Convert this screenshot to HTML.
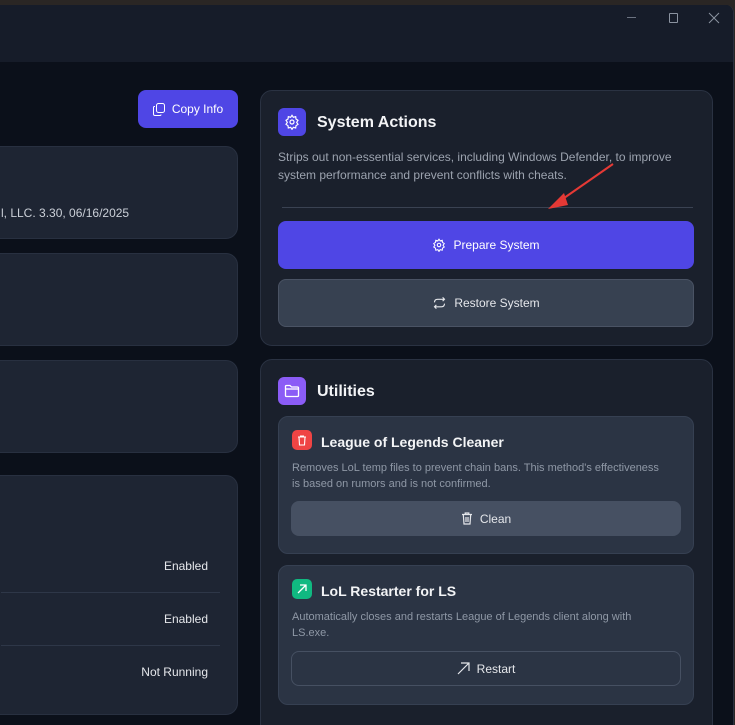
<!DOCTYPE html>
<html><head><style>
*{box-sizing:border-box;margin:0;padding:0}
body{width:735px;height:715px;overflow:hidden;background:#2a2624;font-family:"Liberation Sans",sans-serif;position:relative}
.win{position:absolute;left:0;top:5px;width:734px;height:720px;background:#0b101a;border-top-right-radius:8px;overflow:hidden;border-right:1px solid #2a3040}
.tb{position:absolute;left:0;top:0;width:100%;height:57px;background:#161c29}
.abs{position:absolute}
.card{position:absolute;left:-20px;width:258px;background:#1e2533;border:1px solid #283040;border-radius:12px}
.panel{position:absolute;left:260px;width:453px;background:#1a202c;border:1px solid #2a3242;border-radius:12px}
.btn{position:absolute;display:flex;align-items:center;justify-content:center;gap:7px;color:#e5e7eb;font-size:12px;border-radius:8px}
.sub{position:absolute;left:278px;width:416px;background:#2b3444;border:1px solid #364052;border-radius:10px}
.t{color:#f3f4f6;font-weight:bold}
.d{color:#9ca3af}
</style></head><body>
<div class="win">
<div class="tb">
 <div class="abs" style="left:627px;top:12px;width:9px;height:1px;background:#6b7280"></div>
 <div class="abs" style="left:669px;top:8px;width:9px;height:10px;border:1px solid #8b93a0;border-radius:1px"></div>
 <svg class="abs" style="left:708px;top:7px" width="12" height="12"><path d="M1 1L11 11M11 1L1 11" stroke="#8b93a0" stroke-width="1"/></svg>
</div>
<div class="btn" style="left:138px;top:85px;width:100px;height:38px;background:#4f46e5;font-size:12px;color:#fff"><svg width="12" height="13" viewBox="0 0 12 13"><rect x="3.5" y="0.5" width="8" height="9" rx="2" fill="none" stroke="#fff"/><path d="M2 3.5H1.5Q0.5 3.5 0.5 4.5V11Q0.5 12.5 2 12.5H7Q8 12.5 8 11.5" fill="none" stroke="#fff"/></svg>Copy Info</div>
<div class="card" style="top:141px;height:93px"><div class="abs d" style="left:20px;top:59px;font-size:12px;color:#cbd0d8">l, LLC. 3.30, 06/16/2025</div></div>
<div class="card" style="top:248px;height:93px"></div>
<div class="card" style="top:355px;height:93px"></div>
<div class="card" style="top:470px;height:240px">
 <div class="abs" style="right:29px;top:83px;font-size:12px;color:#e5e7eb">Enabled</div>
 <div class="abs" style="left:20px;right:17px;top:116px;height:1px;background:#2e3748"></div>
 <div class="abs" style="right:29px;top:136px;font-size:12px;color:#e5e7eb">Enabled</div>
 <div class="abs" style="left:20px;right:17px;top:169px;height:1px;background:#2e3748"></div>
 <div class="abs" style="right:29px;top:189px;font-size:12px;color:#e5e7eb">Not Running</div>
</div>
<div class="panel" style="top:85px;height:256px"></div>
<div class="abs" style="left:278px;top:103px;width:28px;height:28px;background:#4f46e5;border-radius:6px;display:flex;align-items:center;justify-content:center"><svg width="16" height="16" viewBox="0 0 24 24" fill="none" stroke="#fff" stroke-width="1.8"><circle cx="12" cy="12" r="3"/><path d="M12 2l2 3 3.5-1 .5 3.5 3 2-2 3 2 3-3 2-.5 3.5-3.5-1-2 3-2-3-3.5 1-.5-3.5-3-2 2-3-2-3 3-2 .5-3.5 3.5 1z"/></svg></div>
<div class="abs t" style="left:317px;top:109px;font-size:16px">System Actions</div>
<div class="abs d" style="left:278px;top:143px;width:420px;font-size:12px;line-height:18px">Strips out non-essential services, including Windows Defender, to improve system performance and prevent conflicts with cheats.</div>
<div class="abs" style="left:282px;top:202px;width:411px;height:1px;background:#3a4252"></div>
<svg class="abs" style="left:540px;top:150px" width="80" height="60"><path d="M73 9L14 50" stroke="#e53935" stroke-width="2"/><path d="M8 54L24 38L28 50Z" fill="#e53935"/></svg>
<div class="btn" style="left:278px;top:216px;width:416px;height:48px;background:#4f46e5;color:#fff"><svg width="14" height="14" viewBox="0 0 24 24" fill="none" stroke="#fff" stroke-width="1.8"><circle cx="12" cy="12" r="3"/><path d="M12 2l2 3 3.5-1 .5 3.5 3 2-2 3 2 3-3 2-.5 3.5-3.5-1-2 3-2-3-3.5 1-.5-3.5-3-2 2-3-2-3 3-2 .5-3.5 3.5 1z"/></svg>Prepare System</div>
<div class="btn" style="left:278px;top:274px;width:416px;height:48px;background:#374151;border:1px solid #4a5364"><svg width="15" height="14" viewBox="0 0 24 22" fill="none" stroke="#e5e7eb" stroke-width="1.8"><path d="M4 10Q4 5 9 5H20M17 2l3 3-3 3M20 12Q20 17 15 17H4M7 20l-3-3 3-3"/></svg>Restore System</div>
<div class="panel" style="top:354px;height:380px"></div>
<div class="abs" style="left:278px;top:372px;width:28px;height:28px;background:#8b5cf6;border-radius:6px;display:flex;align-items:center;justify-content:center"><svg width="16" height="14" viewBox="0 0 16 14" fill="none" stroke="#fff" stroke-width="1.3"><path d="M1.5 2.5Q1.5 1.5 2.5 1.5H6L7.5 3H13.5Q14.5 3 14.5 4V11.5Q14.5 12.5 13.5 12.5H2.5Q1.5 12.5 1.5 11.5Z"/><path d="M1.5 5H14.5"/></svg></div>
<div class="abs t" style="left:317px;top:378px;font-size:16px">Utilities</div>
<div class="sub" style="top:411px;height:138px">
 <div class="abs" style="left:13px;top:13px;width:20px;height:20px;background:#ef4444;border-radius:5px;display:flex;align-items:center;justify-content:center"><svg width="10" height="11" viewBox="0 0 10 11" fill="none" stroke="#fff" stroke-width="1.1"><path d="M1 2H9M2 2L2.5 10H7.5L8 2M3.5 2V1H6.5V2"/></svg></div>
 <div class="abs t" style="left:42px;top:17px;font-size:14px">League of Legends Cleaner</div>
 <div class="abs d" style="left:13px;top:43px;width:372px;font-size:11px;line-height:16px;color:#8f98a6">Removes LoL temp files to prevent chain bans. This method's effectiveness is based on rumors and is not confirmed.</div>
 <div class="btn" style="left:12px;top:84px;width:390px;height:35px;background:#465062"><svg width="12" height="13" viewBox="0 0 12 13" fill="none" stroke="#e5e7eb" stroke-width="1.2"><path d="M1 2.5H11M2.3 2.5L3 12H9L9.7 2.5M4.2 2.5V1H7.8V2.5M5 5V10M7 5V10"/></svg>Clean</div>
</div>
<div class="sub" style="top:560px;height:140px">
 <div class="abs" style="left:13px;top:13px;width:20px;height:20px;background:#10b981;border-radius:5px;display:flex;align-items:center;justify-content:center"><svg width="10" height="10" viewBox="0 0 10 10" fill="none" stroke="#fff" stroke-width="1.3"><path d="M1 9L9 1M3 1H9V7"/></svg></div>
 <div class="abs t" style="left:42px;top:17px;font-size:14px">LoL Restarter for LS</div>
 <div class="abs d" style="left:13px;top:43px;width:360px;font-size:11px;line-height:16px;color:#8f98a6">Automatically closes and restarts League of Legends client along with LS.exe.</div>
 <div class="btn" style="left:12px;top:85px;width:390px;height:35px;border:1px solid #465062"><svg width="13" height="13" viewBox="0 0 13 13" fill="none" stroke="#e5e7eb" stroke-width="1.2"><path d="M1 12L12 1M4 1H12V9"/></svg>Restart</div>
</div>
</div>
</body></html>
